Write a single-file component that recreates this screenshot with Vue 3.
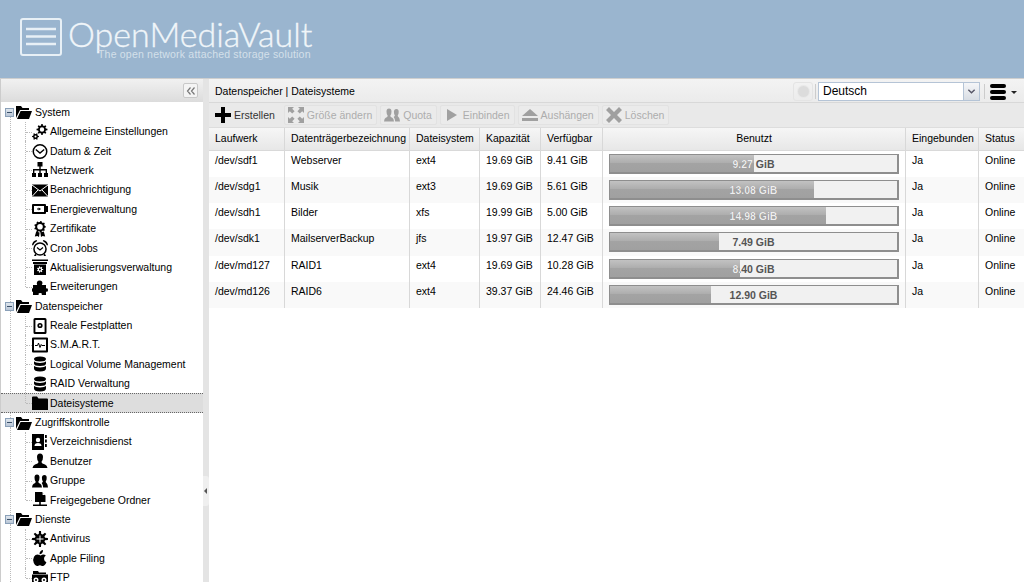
<script setup>
const circle = (x, y, r) => `M${x - r} ${y}a${r} ${r} 0 1 0 ${2 * r} 0a${r} ${r} 0 1 0 ${-2 * r} 0z`
const gear = (cx, cy, R, r, n) => {
  const pts = []
  const step = (Math.PI * 2) / n
  for (let i = 0; i < n; i++) {
    const a = i * step
    for (const [off, rad] of [[-0.3, r], [-0.16, R], [0.16, R], [0.3, r]]) {
      const t = a + off * step
      pts.push(`${(cx + Math.cos(t) * rad).toFixed(2)} ${(cy + Math.sin(t) * rad).toFixed(2)}`)
    }
  }
  return 'M' + pts.join('L') + 'z'
}

const groupPath = 'M5 1.5q2.5 0 2.5 3t-1.2 4.2q0 1.3 2 2.1 1.4.7 1.7 3.7H0q.3-3 1.7-3.700 2-.8 2-2.1Q2.5 7.500 2.500 4.500t2.500-3zM12.500 2q2.200 0 2.200 2.800t-1 3.800q0 1 1 1.700 1 .8 1.300 4.200H11.200q-.2-3-1.500-4.500 1-.5 1.200-1.400-1-1.200-1-3.800T12.500 2z'

const icons = {
  folderOpen: { f: 'M0 2h5l1.500 2H13v2H4L0 14zM4.600 7H16l-3 8H1z' },
  folder: { f: 'M0 2.500q0-1 1-1h4l1.500 2H15q1 0 1 1V15H0z' },
  gears: { f: gear(10, 5.500, 5.500, 4, 8) + circle(10, 5.500, 2.200) + gear(3.500, 12.500, 3.500, 2.500, 6) + circle(3.500, 12.500, 1) },
  clock: { f: circle(8, 8.500, 7.500) + circle(8, 8.500, 6), s: 'M3.800 6.500L8 10l4.200-3.500', w: 1.400 },
  network: { f: 'M5.500 0h5v4.500h-5zM7.300 4.500h1.400V7H15v4h-1.400V8.400H8.700V11H7.300V8.400H2.400V11H1V7h6.300zM0 11h4v4H0zM6 11h4v4H6zM12 11h4v4h-4z' },
  mail: { f: 'M0 2.500h16v12H0z', s: 'M0 3l8 6 8-6M0 14.500l6-6.500M16 14.500L10 8', w: 1, c: '#fff' },
  battery: { f: 'M1 3h12q1 0 1 1v1h2v6h-2v1q0 1-1 1H1q-1 0-1-1V4q0-1 1-1zM2 5v6h10V5zM5 7.400h1.600V6.500l2.500 1.500-2.500 1.500v-.9H5z' },
  cert: { f: gear(8, 5.800, 5.800, 4.800, 9) + circle(8, 5.800, 2.800) + 'M4.200 10.500L2.800 15.500l2.600-.6L7 16l.6-4.500zM11.800 10.500L13.200 15.500l-2.600-.6L9 16l-.6-4.500z' },
  alarm: { f: circle(8, 9, 6.800) + circle(8, 9, 5.300) + 'M0 5Q.5 1 4.500 0L5.200 1Q2 2.500 1 5.500zM16 5Q15.500 1 11.500 0L10.800 1Q14 2.500 15 5.500zM3 14h2l-1 2H2zM13 14h-2l1 2h2z', s: 'M5 7.500L8 10l3-2.500', w: 1.200 },
  update: { f: 'M0 .5h16v1.600H0zM1 3h14v2H1zM2 5.500h12V16H2z' + gear(8, 10.500, 3.200, 2.200, 7) + circle(8, 10.500, 1) },
  puzzle: { f: 'M1 6h4.200Q4 3.200 6.200 1.800 8.500.8 10 2.500q1 1.600-.2 3.500H14v3.600q2-1 2 1.400t-2 1.400V16H9.600q1-2-1.400-2t-1.400 2H1v-3.600q-2 1-2-1.400 0-2.500 2-1.400z' },
  hdd: { f: 'M3 0h10q1.500 0 1.500 1.500v13q0 1.500-1.500 1.500H3q-1.500 0-1.500-1.500v-13Q1.500 0 3 0zM3.400 1.900V14.100H12.600V1.900z' + circle(8, 7.500, 2.600) + circle(8, 7.500, .9) },
  smart: { f: 'M1 .5h14q1 0 1 1v13q0 1-1 1H1q-1 0-1-1v-13q0-1 1-1zM2 2.500v11h12v-11z', s: 'M3 8.500h2.500l1-2.500 1.500 4.500 1.200-3 .6 1H13', w: 1 },
  db: { f: 'M2 3q0-2.500 6-2.500t6 2.500q0 2.500-6 2.500T2 3zM2 5.300q1.500 1.700 6 1.700t6-1.700V7.500Q14 10 8 10T2 7.500zM2 9.800q1.500 1.700 6 1.700t6-1.700V12.500Q14 15.500 8 15.500T2 12.500z' },
  directory: { f: 'M0 0h12v16H0zM13 1h1.800v3H13zM13 5.500h1.800v3H13zM13 10h1.800v3H13z' + circle(6, 6, 2.200) + 'M2.500 12q0-3 3.500-3t3.500 3z' },
  user: { f: 'M8 .5q3 0 3 3.500 0 3.500-1.600 5 .2 1.500 3.600 2.500 2 .8 2.500 3.500H.5q.5-2.700 2.500-3.500 3.400-1 3.600-2.500Q5 7.500 5 4 5 .5 8 .5z' },
  group: { f: groupPath },
  share: { f: 'M3 0h7l3.500 3.500V10H3zM10.600 .8v2.300h2.300zM7.200 10h1.600v2.500H15V14H1v-1.500h6.200z' },
  virus: { f: gear(8, 8, 8, 5.200, 8), s: 'M8 4.500v7M4.500 8h7', w: 1, c: '#fff' },
  apple: { f: 'M11 0q.2 2-1 3.200Q8.800 4.300 7.500 4.200 7.400 2.500 8.500 1.300 9.700.1 11 0zM13.800 5.500Q11.800 6.800 12 9q.2 2.300 2.400 3.200-1.700 3.800-3.500 3.800-1 0-2-.5t-2 0q-1 .5-2 .5Q3 16 1.800 13 .5 9.500 2 6.800 3.300 4.600 5.500 4.600q1 0 2 .5t1.600.1q1-.6 2.100-.6 1.700 0 2.600.9z' },
  ftp: { f: 'M1 1h5l1 1.500h7V4H1zM0 4.500h16V15H0z' + circle(4, 10, 2.500) + circle(12, 10, 2.500) + circle(4, 10, 1) + circle(12, 10, 1) },
  plus: { f: 'M6 0h4v6h6v4h-6v6H6v-6H0V6h6z' },
  resize: { f: 'M0 0h6L4.200 1.800l2.400 2.400-2.400 2.400-2.400-2.400L0 6zM16 0v6l-1.800-1.800-2.400 2.400-2.400-2.400 2.400-2.400L10 0zM0 16v-6l1.800 1.800 2.400-2.400 2.400 2.400-2.400 2.400L6 16zM16 16h-6l1.800-1.800-2.400-2.400 2.400-2.400 2.400 2.400L16 10z' },
  play: { f: 'M3 2l10 6-10 6z' },
  eject: { f: 'M8 2l8 7H0zM0 11h16v3H0z' },
  close: { f: 'M3 0l5 5 5-5 3 3-5 5 5 5-3 3-5-5-5 5-3-3 5-5-5-5z' },
}

const tree = [
  { label: 'System', children: [
    ['Allgemeine Einstellungen', 'gears'], ['Datum & Zeit', 'clock'], ['Netzwerk', 'network'],
    ['Benachrichtigung', 'mail'], ['Energieverwaltung', 'battery'], ['Zertifikate', 'cert'],
    ['Cron Jobs', 'alarm'], ['Aktualisierungsverwaltung', 'update'], ['Erweiterungen', 'puzzle'],
  ] },
  { label: 'Datenspeicher', children: [
    ['Reale Festplatten', 'hdd'], ['S.M.A.R.T.', 'smart'], ['Logical Volume Management', 'db'],
    ['RAID Verwaltung', 'db'], ['Dateisysteme', 'folder', true],
  ] },
  { label: 'Zugriffskontrolle', children: [
    ['Verzeichnisdienst', 'directory'], ['Benutzer', 'user'], ['Gruppe', 'group'], ['Freigegebene Ordner', 'share'],
  ] },
  { label: 'Dienste', children: [
    ['Antivirus', 'virus'], ['Apple Filing', 'apple'], ['FTP', 'ftp'],
  ] },
]

const tools = [
  { label: 'Erstellen', icon: 'plus', on: true },
  { label: 'Größe ändern', icon: 'resize' },
  { label: 'Quota', icon: 'group' },
  { label: 'Einbinden', icon: 'play' },
  { label: 'Aushängen', icon: 'eject' },
  { label: 'Löschen', icon: 'close' },
]

const columns = ['Laufwerk', 'Datenträgerbezeichnung', 'Dateisystem', 'Kapazität', 'Verfügbar', 'Benutzt', 'Eingebunden', 'Status']

const rows = [
  ['/dev/sdf1', 'Webserver', 'ext4', '19.69 GiB', '9.41 GiB', '9.27 GiB', 50.3],
  ['/dev/sdg1', 'Musik', 'ext3', '19.69 GiB', '5.61 GiB', '13.08 GiB', 71.1],
  ['/dev/sdh1', 'Bilder', 'xfs', '19.99 GiB', '5.00 GiB', '14.98 GiB', 75.3],
  ['/dev/sdk1', 'MailserverBackup', 'jfs', '19.97 GiB', '12.47 GiB', '7.49 GiB', 38.1],
  ['/dev/md127', 'RAID1', 'ext4', '19.69 GiB', '10.28 GiB', '8.40 GiB', 45.4],
  ['/dev/md126', 'RAID6', 'ext4', '39.37 GiB', '24.46 GiB', '12.90 GiB', 35.3],
]
</script>

<template>
  <div class="app">
    <header class="banner">
      <svg class="logo" viewBox="0 0 42 38" width="42" height="38">
        <rect x="1" y="1" width="40" height="36" rx="2" fill="none" stroke="#e8f0f6" stroke-width="2" />
        <path d="M6 11h30M6 18.500h30M6 26h30" stroke="#e8f0f6" stroke-width="2.400" />
      </svg>
      <div class="brand">
        <div class="brand-name">OpenMediaVault</div>
        <div class="brand-sub">The open network attached storage solution</div>
      </div>
    </header>

    <div class="body">
      <aside class="west">
        <div class="west-head">
          <button class="collapse">
            <svg viewBox="0 0 10 10" width="10" height="10"><path d="M4.500 1.500L1.500 5l3 3.500M8.500 1.500L5.500 5l3 3.500" fill="none" stroke="#777" stroke-width="1.200" /></svg>
          </button>
        </div>
        <div class="tree">
          <section v-for="g in tree" :key="g.label" class="group">
            <div class="node root">
              <span class="minus"></span>
              <svg class="ico" viewBox="0 0 16 16"><path :d="icons.folderOpen.f" fill-rule="evenodd" /></svg>
              <span class="lbl">{{ g.label }}</span>
            </div>
            <div v-for="(c, ci) in g.children" :key="c[0]" class="node child" :class="{ sel: c[2], end: ci === g.children.length - 1 }">
              <svg class="ico" viewBox="0 0 16 16">
                <path :d="icons[c[1]].f" fill-rule="evenodd" />
                <path v-if="icons[c[1]].s" :d="icons[c[1]].s" fill="none" :stroke="icons[c[1]].c || '#000'" :stroke-width="icons[c[1]].w" />
              </svg>
              <span class="lbl">{{ c[0] }}</span>
            </div>
          </section>
        </div>
      </aside>

      <div class="splitter"><span class="handle"></span></div>

      <main class="center">
        <div class="titlebar">
          <span class="title">Datenspeicher | Dateisysteme</span>
          <span class="dot"><i></i></span>
          <span class="sep first"></span>
          <div class="combo">
            <span class="combo-text">Deutsch</span>
            <span class="combo-btn">
              <svg viewBox="0 0 10 10" width="9" height="9"><path d="M1.500 3l3.500 3.500L8.500 3" fill="none" stroke="#556" stroke-width="1.500" /></svg>
            </span>
          </div>
          <span class="sep second"></span>
          <span class="menu"><i></i><i></i><i></i></span>
          <span class="caret"></span>
        </div>

        <div class="toolbar">
          <div v-for="t in tools" :key="t.label" class="tool" :class="{ on: t.on }">
            <svg class="tool-ico" viewBox="0 0 16 16"><path :d="icons[t.icon].f" fill-rule="evenodd" /></svg>
            <span>{{ t.label }}</span>
          </div>
        </div>

        <div class="grid-row head">
          <div v-for="(c, i) in columns" :key="c" class="cell" :class="{ mid: i === 5 }">{{ c }}</div>
        </div>
        <div class="grid-body">
          <div v-for="r in rows" :key="r[0]" class="grid-row data">
            <div v-for="i in 5" :key="i" class="cell">{{ r[i - 1] }}</div>
            <div class="cell bar-cell">
              <div class="bar">
                <div class="bar-fill" :style="{ width: r[6] + '%' }"></div>
                <span class="bar-text dark">{{ r[5] }}</span>
                <span class="bar-text light" :style="{ clipPath: `inset(0 ${100 - r[6]}% 0 0)` }" aria-hidden="true">{{ r[5] }}</span>
              </div>
            </div>
            <div class="cell">Ja</div>
            <div class="cell">Online</div>
          </div>
        </div>
      </main>
    </div>
  </div>
</template>

<style>
html, body { margin: 0; height: 100%; overflow: hidden; }
</style>

<style scoped>
.app {
  height: 582px; display: flex; flex-direction: column; overflow: hidden;
  font: 10.500px/13px "Liberation Sans", Arial, sans-serif; color: #000; background: #e0e0e0;
}
.banner {
  height: 78px; flex: none; box-sizing: border-box; background: #9ab5cf;
  display: flex; align-items: flex-start; padding: 18px 0 0 20px; gap: 6px;
}
.logo { flex: none; }
.brand { margin-top: 1px; }
.brand-name {
  font: 300 34px/30px Lato, "Open Sans", sans-serif; color: #f0f5f9; -webkit-text-stroke: .35px #f0f5f9; white-space: nowrap;
}
.brand-sub {
  font: 10.500px/12px "Liberation Sans", sans-serif; color: #d4e0ea; margin: -1px 0 0 30px; letter-spacing: .2px; white-space: nowrap;
}
.body { flex: 1; display: flex; min-height: 0; border-top: 1px solid #cfcfcf; }

.west { width: 203px; flex: none; display: flex; flex-direction: column; box-sizing: border-box; border-left: 1px solid #ccc; background: #fff; }
.west-head {
  height: 23px; flex: none; display: flex; justify-content: flex-end; align-items: center; padding-right: 5px;
  background: linear-gradient(#f1f1f1, #dcdcdc);
}
.collapse {
  width: 15px; height: 15px; padding: 0; border: 1px solid #c8c8c8; border-radius: 2px; background: #f4f4f4;
  display: flex; align-items: center; justify-content: center;
}
.tree { flex: 1; overflow: hidden; padding-top: .6px; }
.group { position: relative; }
.group::before {
  content: ""; position: absolute; left: 9px; top: 14px; bottom: -5px; border-left: 1px dotted #bbb;
}
.node { height: 19.400px; display: flex; align-items: center; box-sizing: border-box; position: relative; white-space: nowrap; }
.root { padding-left: 4px; }
.minus {
  width: 9px; height: 9px; box-sizing: border-box; border: 1px solid #8aa0b8; background: linear-gradient(#dfe6ee, #b9c6d6);
  flex: none; position: relative; z-index: 1;
}
.minus::after { content: ""; position: absolute; left: 1px; right: 1px; top: 3px; height: 1px; background: #3a5068; }
.root .ico { margin-left: 2px; }
.root .lbl { margin-left: 3px; }
.child { padding-left: 31px; }
.child::before {
  content: ""; position: absolute; left: 24px; top: 0; bottom: 0; border-left: 1px dotted #bbb;
}
.child.end::before { bottom: 50%; }
.child::after {
  content: ""; position: absolute; left: 25px; width: 6px; top: 50%; border-top: 1px dotted #bbb;
}
.ico { width: 16px; height: 16px; flex: none; fill: #000; position: relative; z-index: 1; }
.child .lbl { margin-left: 2px; }
.sel { background: #ddd; border-top: 1px dotted #666; border-bottom: 1px dotted #666; }

.splitter { width: 6px; flex: none; background: #e4e4e4; display: flex; align-items: center; position: relative; }
.handle {
  position: absolute; left: 0; top: 397px; width: 6px; height: 30px; background: #efefef; border-radius: 0 3px 3px 0;
}
.handle::after {
  content: ""; position: absolute; left: 1px; top: 12px; border: 3px solid transparent; border-left: 0; border-right: 3px solid #555;
}

.center { flex: 1; min-width: 0; display: flex; flex-direction: column; background: #fff; }
.titlebar {
  height: 24px; flex: none; box-sizing: border-box; display: flex; align-items: center; padding: 2px 0 0 6px;
  background: linear-gradient(#f3f3f3, #ebebeb); border-bottom: 1px solid #d8d8d8;
}
.title { flex: 1; }
.dot {
  width: 20px; height: 19px; box-sizing: border-box; border: 1px solid #e4e4e4; border-radius: 3px;
  display: flex; align-items: center; justify-content: center; margin-right: 2px;
}
.dot i { width: 11px; height: 11px; border-radius: 50%; background: #dcdcdc; box-shadow: 0 0 0 1px #e8e8e8; }
.sep { width: 1px; height: 15px; background: #ccc; }
.sep.first { margin-right: 2px; }
.sep.second { margin: 0 5px 0 4px; }
.combo {
  width: 162px; height: 19px; box-sizing: border-box; display: flex; border: 1px solid #b5c4d6; background: #fff;
}
.combo-text { flex: 1; font-size: 12px; line-height: 17px; padding-left: 4px; }
.combo-btn {
  width: 15px; background: linear-gradient(#f5f6f8, #d8dde4); border-left: 1px solid #b5c4d6;
  display: flex; align-items: center; justify-content: center;
}
.menu { width: 16px; display: flex; flex-direction: column; gap: 2px; }
.menu i { height: 4px; background: #000; border-radius: 2px; }
.caret { width: 0; height: 0; border: 3px solid transparent; border-top-color: #222; border-bottom: 0; margin: 1px 7px 0 5px; }

.toolbar {
  height: 25px; flex: none; box-sizing: border-box; background: #e9e9e9; border-bottom: 1px solid #ddd;
  display: flex; align-items: center; padding-left: 2px; gap: 3px;
}
.tool {
  height: 20px; box-sizing: border-box; display: flex; align-items: center; gap: 3px; padding: 0 4px 0 3px;
  color: #adadad; border: 1px solid #e2e2e2; border-radius: 2px; background: #ebebeb;
}
.tool.on { color: #333; border-color: transparent; background: none; padding-right: 5px; }
.tool-ico { width: 16px; height: 16px; fill: #a0a0a0; }
.tool.on .tool-ico { fill: #000; }

.grid-row { display: grid; grid-template-columns: 76px 125px 70px 61px 62px 303px 73px 45px; }
.head { height: 23px; flex: none; background: linear-gradient(#f6f6f6, #e7e7e7); border-bottom: 1px solid #d9d9d9; box-sizing: border-box; }
.head .cell { line-height: 21px; padding-top: 0; }
.mid { text-align: center; padding-left: 0 !important; }
.cell { box-sizing: border-box; padding: 3px 0 0 6px; border-right: 1px solid #d8d8d8; white-space: nowrap; overflow: hidden; }
.cell:last-child { border-right: 0; }
.data { height: 26.170px; }
.data:nth-child(even) { background: #f9f9f9; }
.bar-cell { padding: 3px 6px 0; }
.bar {
  height: 20px; box-sizing: border-box; border: 1px solid #8e8e8e; border-bottom-width: 2px; border-right-width: 2px; background: #f1f1f1;
  position: relative;
}
.bar-fill {
  position: absolute; left: 0; top: 0; bottom: 0;
  background: linear-gradient(#c2c2c2, #aeaeae 45%, #a3a3a3 50%, #a0a0a0);
}
.bar-text {
  position: absolute; top: 0; left: 0; width: 100%; line-height: 18px; text-align: center; font-weight: 700; white-space: nowrap;
}
.dark { color: #555; }
.light { color: #eee; }
</style>
